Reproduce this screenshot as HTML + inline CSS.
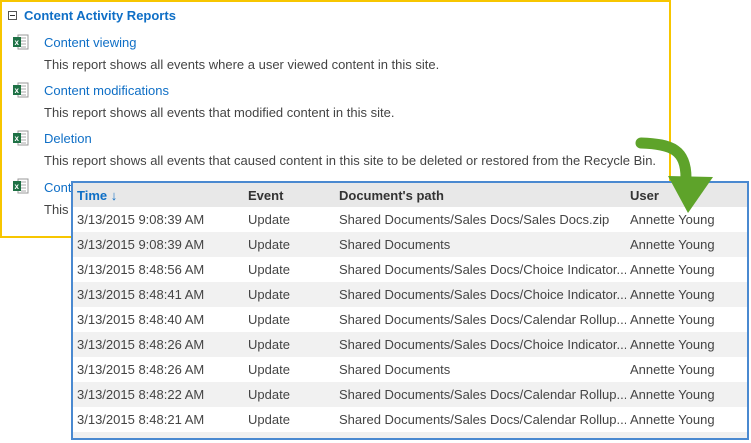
<!DOCTYPE html>
<html><head><style>
body{margin:0;width:751px;height:443px;background:#fff;position:relative;overflow:hidden;font-family:"Liberation Sans",sans-serif;}
.y{position:absolute;left:0;top:0;width:667px;height:234px;border:2px solid #f7c600;}
.t{position:absolute;left:24px;top:8px;font-size:13px;font-weight:bold;color:#0f6fc6;}
.m{position:absolute;left:8px;top:11px;width:7px;height:7px;border:1px solid #555;}
.m:after{content:"";position:absolute;left:1px;top:3px;width:5px;height:1px;background:#333;}
.l{position:absolute;left:44px;font-size:13px;color:#0f6fc6;}
.d{position:absolute;left:44px;font-size:13px;color:#444;}
.ic{position:absolute;left:13px;width:16px;height:16px;}
.b{position:absolute;left:71px;top:181px;width:674px;height:255px;border:2px solid #4a89d0;background:#f0f0f0;}
table{border-collapse:collapse;width:674px;font-size:13px;color:#444;table-layout:fixed;}
td,th{height:25px;padding:0 0 0 4px;text-align:left;white-space:nowrap;overflow:hidden;}
th{background:#e8e8e8;height:24px;color:#333;}
tr.w td{background:#fff;}
tr.g td{background:#f1f1f1;}
</style></head><body>
<div class="y"></div>
<div class="m"></div>
<div class="t">Content Activity Reports</div>
<svg class="ic" style="top:34px" viewBox="0 0 16 16"><rect x="5" y="1" width="10" height="14" fill="#fff" stroke="#999"/><path d="M8 4h5M8 7h5M8 10h5M8 13h5" stroke="#aaa"/><rect x="0" y="3" width="8" height="10" fill="#1e7145"/><text x="1.5" y="11" font-size="8" fill="#fff" font-family="Liberation Sans" font-weight="bold">x</text></svg>
<div class="l" style="top:35px">Content viewing</div>
<div class="d" style="top:57px">This report shows all events where a user viewed content in this site.</div>
<svg class="ic" style="top:82px" viewBox="0 0 16 16"><rect x="5" y="1" width="10" height="14" fill="#fff" stroke="#999"/><path d="M8 4h5M8 7h5M8 10h5M8 13h5" stroke="#aaa"/><rect x="0" y="3" width="8" height="10" fill="#1e7145"/><text x="1.5" y="11" font-size="8" fill="#fff" font-family="Liberation Sans" font-weight="bold">x</text></svg>
<div class="l" style="top:83px">Content modifications</div>
<div class="d" style="top:105px">This report shows all events that modified content in this site.</div>
<svg class="ic" style="top:130px" viewBox="0 0 16 16"><rect x="5" y="1" width="10" height="14" fill="#fff" stroke="#999"/><path d="M8 4h5M8 7h5M8 10h5M8 13h5" stroke="#aaa"/><rect x="0" y="3" width="8" height="10" fill="#1e7145"/><text x="1.5" y="11" font-size="8" fill="#fff" font-family="Liberation Sans" font-weight="bold">x</text></svg>
<div class="l" style="top:131px">Deletion</div>
<div class="d" style="top:153px">This report shows all events that caused content in this site to be deleted or restored from the Recycle Bin.</div>
<svg class="ic" style="top:178px" viewBox="0 0 16 16"><rect x="5" y="1" width="10" height="14" fill="#fff" stroke="#999"/><path d="M8 4h5M8 7h5M8 10h5M8 13h5" stroke="#aaa"/><rect x="0" y="3" width="8" height="10" fill="#1e7145"/><text x="1.5" y="11" font-size="8" fill="#fff" font-family="Liberation Sans" font-weight="bold">x</text></svg>
<div class="l" style="top:180px">Content</div>
<div class="d" style="top:202px">This</div>
<div class="b"><table>
<colgroup><col style="width:171px"><col style="width:91px"><col style="width:291px"><col></colgroup>
<tr><th style="color:#0f6fc6">Time ↓</th><th>Event</th><th>Document's path</th><th>User</th></tr>
<tr class="w"><td>3/13/2015 9:08:39 AM</td><td>Update</td><td>Shared Documents/Sales Docs/Sales Docs.zip</td><td>Annette Young</td></tr>
<tr class="g"><td>3/13/2015 9:08:39 AM</td><td>Update</td><td>Shared Documents</td><td>Annette Young</td></tr>
<tr class="w"><td>3/13/2015 8:48:56 AM</td><td>Update</td><td>Shared Documents/Sales Docs/Choice Indicator...</td><td>Annette Young</td></tr>
<tr class="g"><td>3/13/2015 8:48:41 AM</td><td>Update</td><td>Shared Documents/Sales Docs/Choice Indicator...</td><td>Annette Young</td></tr>
<tr class="w"><td>3/13/2015 8:48:40 AM</td><td>Update</td><td>Shared Documents/Sales Docs/Calendar Rollup...</td><td>Annette Young</td></tr>
<tr class="g"><td>3/13/2015 8:48:26 AM</td><td>Update</td><td>Shared Documents/Sales Docs/Choice Indicator...</td><td>Annette Young</td></tr>
<tr class="w"><td>3/13/2015 8:48:26 AM</td><td>Update</td><td>Shared Documents</td><td>Annette Young</td></tr>
<tr class="g"><td>3/13/2015 8:48:22 AM</td><td>Update</td><td>Shared Documents/Sales Docs/Calendar Rollup...</td><td>Annette Young</td></tr>
<tr class="w"><td>3/13/2015 8:48:21 AM</td><td>Update</td><td>Shared Documents/Sales Docs/Calendar Rollup...</td><td>Annette Young</td></tr>
</table></div>
<svg style="position:absolute;left:0;top:0" width="751" height="443"><path d="M641 143 C672 144 686 150 686 178" fill="none" stroke="#5ea32a" stroke-width="11" stroke-linecap="round"/><polygon points="668,176 713,177 688,213" fill="#5ea32a"/></svg>
</body></html>
